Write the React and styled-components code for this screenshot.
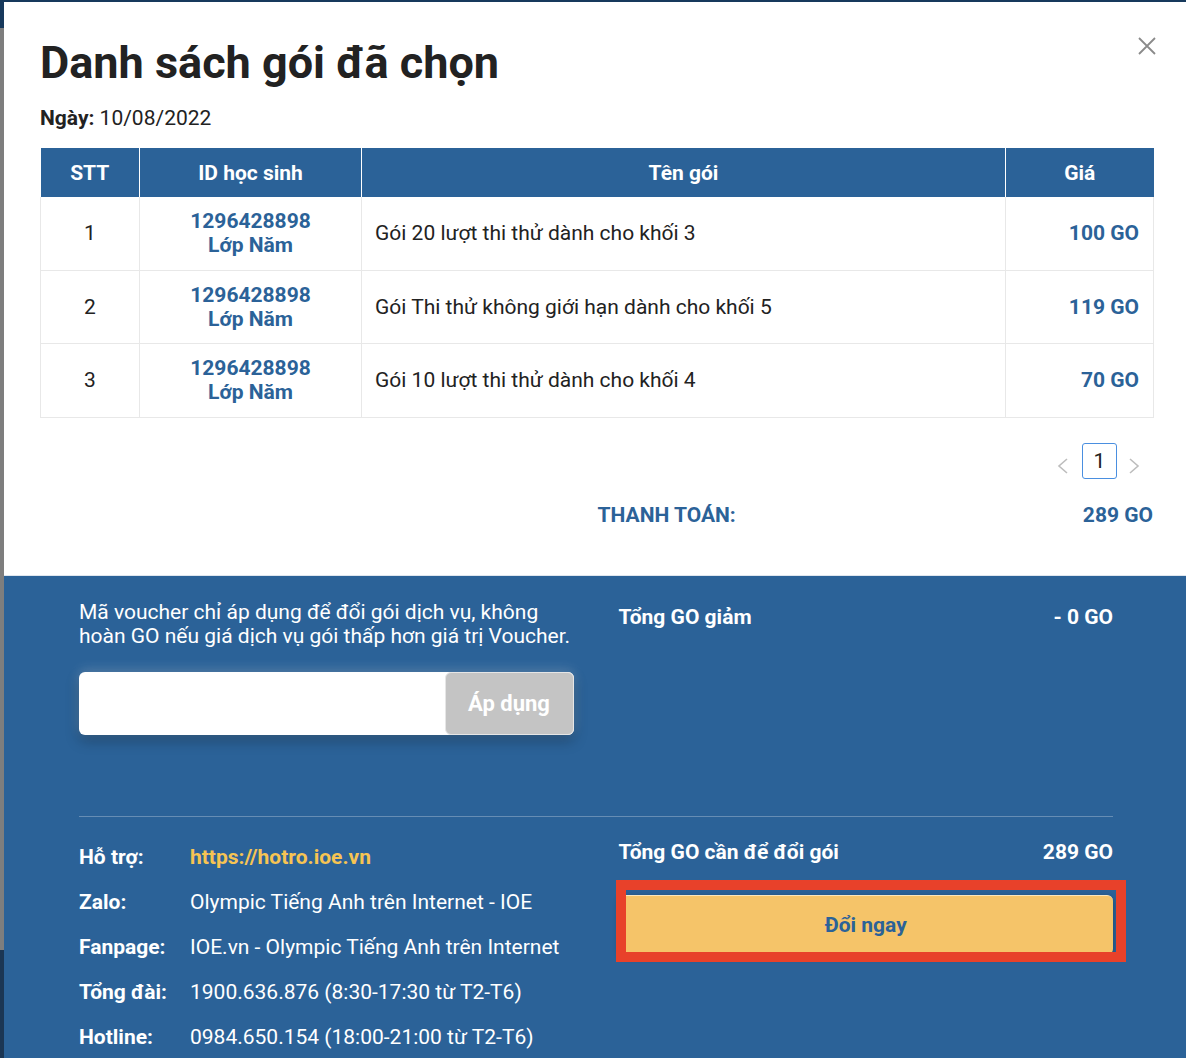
import React from "react";
import styled, { createGlobalStyle } from "styled-components";

const GlobalStyle = createGlobalStyle`
  html, body {
    margin: 0;
    padding: 0;
    overflow: hidden;
  }
  body {
    font-family: Roboto, "Noto Sans", "Liberation Sans", sans-serif;
  }
`;

const BLUE = "#2b6298";

const Backdrop = styled.div`
  width: 1186px;
  height: 1058px;
  padding: 2px 0 0 4px;
  box-sizing: border-box;
  overflow: hidden;
  background: linear-gradient(
    to bottom,
    #17395c 0 28px,
    #7e7e7e 28px 950px,
    #1b3654 950px
  );
`;

const Modal = styled.div`
  position: relative;
  width: 1185px;
  background: #fff;
`;

const CloseButton = styled.button`
  position: absolute;
  top: 34px;
  right: 32px;
  width: 20px;
  height: 20px;
  padding: 0;
  border: none;
  background: none;
  cursor: pointer;
`;

const Top = styled.div`
  padding: 34px 36px 48px 36px;
`;

const Title = styled.h1`
  margin: 0;
  font-size: 45px;
  line-height: 54px;
  font-weight: 700;
  color: #222;
`;

const DateLine = styled.div`
  margin-top: 16px;
  font-size: 21px;
  line-height: 24px;
  color: #222;
  b {
    font-weight: 700;
  }
`;

const Table = styled.table`
  margin-top: 18px;
  width: 1113px;
  table-layout: fixed;
  border-collapse: collapse;
  font-size: 21px;
  line-height: 24px;
  color: #222;
`;

const Th = styled.th`
  height: 49px;
  padding: 0;
  background: ${BLUE};
  color: #fff;
  font-weight: 700;
  text-align: center;
  border-left: 1px solid #fff;
  &:first-child {
    border-left: none;
  }
`;

const Td = styled.td`
  height: 73.4px;
  padding: 0 ${(p) => (p.$align === "right" ? "14px" : "13px")};
  box-sizing: border-box;
  border: 1px solid #e8e8e8;
  border-top: none;
  text-align: ${(p) => p.$align || "center"};
  color: ${(p) => (p.$blue ? BLUE : "#222")};
  font-weight: ${(p) => (p.$blue ? 700 : 400)};
`;

const Pager = styled.div`
  margin-top: 25px;
  display: flex;
  justify-content: flex-end;
  align-items: flex-start;
  padding-right: 4px;
`;

const Chevron = styled.span`
  width: 30px;
  height: 36px;
  padding-top: 10px;
  box-sizing: border-box;
  display: flex;
  align-items: center;
  justify-content: center;
`;

const PageBox = styled.span`
  width: 35px;
  height: 36px;
  box-sizing: border-box;
  margin: 0 2px 0 4px;
  border: 1px solid #4a8fe0;
  border-radius: 3px;
  display: flex;
  align-items: center;
  justify-content: center;
  font-size: 21px;
  color: #222;
`;

const Summary = styled.div`
  margin-top: 24px;
  display: grid;
  grid-template-columns: 1fr 1fr;
`;

const SummaryRight = styled.div`
  display: flex;
  justify-content: space-between;
  padding-left: 1px;
  font-size: 21px;
  line-height: 24px;
  font-weight: 700;
  color: ${BLUE};
`;

const Bottom = styled.div`
  background: ${BLUE};
  border-top: 1px solid #dfe6ee;
  padding: 24px 76px 12px 75px;
  color: #fff;
`;

const Columns = styled.div`
  display: grid;
  grid-template-columns: 1fr 1fr;
  column-gap: 45px;
`;

const Note = styled.p`
  margin: 0;
  font-size: 21px;
  line-height: 24px;
`;

const VoucherBox = styled.div`
  margin-top: 24px;
  height: 63px;
  display: flex;
  background: #fff;
  border-radius: 6px;
  box-shadow: 0 6px 14px rgba(0, 0, 0, 0.25), 0 -2px 12px rgba(255, 255, 255, 0.22);
`;

const VoucherInput = styled.input`
  flex: 1;
  min-width: 0;
  border: none;
  outline: none;
  background: transparent;
  padding: 0 16px;
  font-size: 21px;
  font-family: inherit;
`;

const ApplyButton = styled.button`
  width: 129px;
  border: 1px solid #e6e6e6;
  border-radius: 6px;
  background: #c4c4c4;
  color: #fff;
  font-family: inherit;
  font-size: 22px;
  font-weight: 700;
`;

const Line = styled.div`
  display: flex;
  justify-content: space-between;
  font-size: 21px;
  line-height: 24px;
  font-weight: 700;
  padding-top: ${(p) => p.$pt || 0}px;
`;

const Divider = styled.hr`
  margin: 81px 0 0;
  border: none;
  border-top: 1px solid rgba(255, 255, 255, 0.28);
`;

const Footer = styled(Columns)`
  margin-top: 23px;
`;

const InfoList = styled.div`
  display: grid;
  grid-template-columns: 111px 1fr;
  row-gap: 21px;
  padding-top: 5px;
  font-size: 21px;
  line-height: 24px;
`;

const Label = styled.span`
  font-weight: 700;
`;

const Value = styled.span`
  white-space: nowrap;
  color: ${(p) => (p.$link ? "#f6c453" : "#fff")};
  font-weight: ${(p) => (p.$link ? 700 : 400)};
`;

const ButtonWrap = styled.div`
  position: relative;
  margin-top: 31px;
  &::after {
    content: "";
    position: absolute;
    left: -3px;
    right: -13px;
    top: -15px;
    bottom: -7px;
    border: 10px solid #e8412a;
    pointer-events: none;
  }
`;

const ExchangeButton = styled.button`
  display: block;
  width: 100%;
  height: 60px;
  border: none;
  border-top: 1px solid #fbe6bd;
  border-radius: 6px;
  background: #f5c469;
  box-shadow: 0 2px 6px rgba(0, 0, 0, 0.3);
  color: ${BLUE};
  font-family: inherit;
  font-size: 21px;
  font-weight: 700;
`;

const rows = [
  { id: "1296428898", cls: "Lớp Năm", name: "Gói 20 lượt thi thử dành cho khối 3", price: "100 GO" },
  { id: "1296428898", cls: "Lớp Năm", name: "Gói Thi thử không giới hạn dành cho khối 5", price: "119 GO" },
  { id: "1296428898", cls: "Lớp Năm", name: "Gói 10 lượt thi thử dành cho khối 4", price: "70 GO" },
];

const info = [
  ["Hỗ trợ:", "https://hotro.ioe.vn", true],
  ["Zalo:", "Olympic Tiếng Anh trên Internet - IOE"],
  ["Fanpage:", "IOE.vn - Olympic Tiếng Anh trên Internet"],
  ["Tổng đài:", "1900.636.876 (8:30-17:30 từ T2-T6)"],
  ["Hotline:", "0984.650.154 (18:00-21:00 từ T2-T6)"],
];

const ChevronIcon = ({ dir }) => (
  <svg width="12" height="16" viewBox="0 0 12 16">
    <path
      d={dir === "left" ? "M10 1 L2 8 L10 15" : "M2 1 L10 8 L2 15"}
      fill="none"
      stroke="#bdbdbd"
      strokeWidth="1.6"
    />
  </svg>
);

export default function App() {
  return (
    <>
      <GlobalStyle />
      <Backdrop>
        <Modal>
          <CloseButton aria-label="Đóng">
            <svg width="20" height="20" viewBox="0 0 20 20">
              <path d="M2 2 L18 18 M18 2 L2 18" stroke="#8a8a8a" strokeWidth="1.8" />
            </svg>
          </CloseButton>
          <Top>
            <Title>Danh sách gói đã chọn</Title>
            <DateLine>
              <b>Ngày:</b> 10/08/2022
            </DateLine>
            <Table>
              <colgroup>
                <col style={{ width: 99 }} />
                <col style={{ width: 222 }} />
                <col style={{ width: 644 }} />
                <col style={{ width: 148 }} />
              </colgroup>
              <thead>
                <tr>
                  <Th>STT</Th>
                  <Th>ID học sinh</Th>
                  <Th>Tên gói</Th>
                  <Th>Giá</Th>
                </tr>
              </thead>
              <tbody>
                {rows.map((r, i) => (
                  <tr key={i}>
                    <Td>{i + 1}</Td>
                    <Td $blue>
                      {r.id}
                      <br />
                      {r.cls}
                    </Td>
                    <Td $align="left">{r.name}</Td>
                    <Td $align="right" $blue>
                      {r.price}
                    </Td>
                  </tr>
                ))}
              </tbody>
            </Table>
            <Pager>
              <Chevron>
                <ChevronIcon dir="left" />
              </Chevron>
              <PageBox>1</PageBox>
              <Chevron>
                <ChevronIcon dir="right" />
              </Chevron>
            </Pager>
            <Summary>
              <div />
              <SummaryRight>
                <span>THANH TOÁN:</span>
                <span>289 GO</span>
              </SummaryRight>
            </Summary>
          </Top>
          <Bottom>
            <Columns>
              <div>
                <Note>
                  Mã voucher chỉ áp dụng để đổi gói dịch vụ, không hoàn GO nếu giá dịch vụ gói thấp hơn giá trị
                  Voucher.
                </Note>
                <VoucherBox>
                  <VoucherInput />
                  <ApplyButton>Áp dụng</ApplyButton>
                </VoucherBox>
              </div>
              <div>
                <Line $pt={5}>
                  <span>Tổng GO giảm</span>
                  <span>- 0 GO</span>
                </Line>
              </div>
            </Columns>
            <Divider />
            <Footer>
              <InfoList>
                {info.map(([label, value, link]) => (
                  <React.Fragment key={label}>
                    <Label>{label}</Label>
                    <Value $link={link}>{value}</Value>
                  </React.Fragment>
                ))}
              </InfoList>
              <div>
                <Line>
                  <span>Tổng GO cần để đổi gói</span>
                  <span>289 GO</span>
                </Line>
                <ButtonWrap>
                  <ExchangeButton>Đổi ngay</ExchangeButton>
                </ButtonWrap>
              </div>
            </Footer>
          </Bottom>
        </Modal>
      </Backdrop>
    </>
  );
}
